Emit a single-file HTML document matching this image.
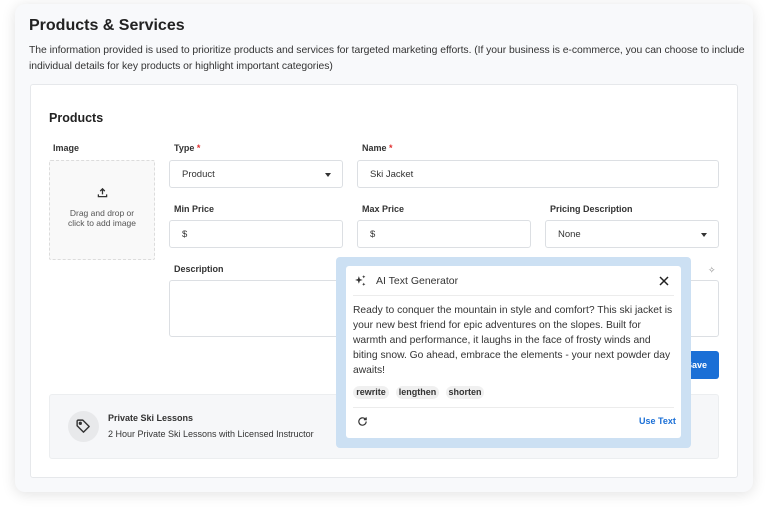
<!DOCTYPE html>
<html><head><meta charset="utf-8"><style>
*{box-sizing:border-box;margin:0;padding:0}
body{width:768px;height:518px;background:#fff;font-family:"Liberation Sans",sans-serif;color:#222;position:relative;overflow:hidden}
.a{position:absolute}
.outer{left:15px;top:4px;width:738px;height:488px;background:#f8f9fb;border-radius:10px;box-shadow:0 2px 14px rgba(0,0,0,.12)}
.inner{left:30px;top:84px;width:708px;height:394px;background:#fff;border:1px solid #e6e8eb;border-radius:3px}
.lbl{font-size:9px;font-weight:bold;color:#333}
.in{background:#fff;border:1px solid #dcdfe3;border-radius:3px;font-size:9.5px;color:#333;padding-left:12px;display:flex;align-items:center}
.caret{position:absolute;right:11px;top:12px;width:0;height:0;border-left:3.5px solid transparent;border-right:3.5px solid transparent;border-top:4px solid #333}
.star{color:#e03030}
.chip{top:386px;height:13px;background:#f0f0f0;border-radius:7px;font-size:9px;font-weight:bold;color:#333;line-height:13px;text-align:center}
</style></head><body>
<div class="a outer"></div>
<div class="a" style="left:29px;top:17px;font-size:16px;font-weight:bold;color:#222">Products &amp; Services</div>
<div class="a" style="left:29px;top:43px;width:725px;font-size:10.4px;line-height:16px;color:#333;letter-spacing:-0.05px">The information provided is used to prioritize products and services for targeted marketing efforts. (If your business is e-commerce, you can choose to include individual details for key products or highlight important categories)</div>
<div class="a inner"></div>
<div class="a" style="left:49px;top:111px;font-size:12.5px;font-weight:bold">Products</div>
<div class="a lbl" style="left:53px;top:143px">Image</div>
<div class="a lbl" style="left:174px;top:143px">Type <span class="star">*</span></div>
<div class="a lbl" style="left:362px;top:143px">Name <span class="star">*</span></div>
<div class="a" style="left:49px;top:160px;width:106px;height:100px;border:1px dashed #dcdcdc;background:#f9f9f9;border-radius:2px;text-align:center;font-size:8.5px;color:#555;line-height:10px">
<svg style="position:absolute;left:47px;top:26px" width="11" height="11" viewBox="0 0 12 12" fill="none" stroke="#333" stroke-width="1.4"><path d="M6 8V2M3.5 4.5L6 2l2.5 2.5M1.5 8v2.5h9V8"/></svg>
<div style="position:absolute;top:47px;width:100%">Drag and drop or<br>click to add image</div></div>
<div class="a in" style="left:169px;top:160px;width:174px;height:28px">Product<div class="caret"></div></div>
<div class="a in" style="left:357px;top:160px;width:362px;height:28px">Ski Jacket</div>
<div class="a lbl" style="left:174px;top:204px">Min Price</div>
<div class="a lbl" style="left:362px;top:204px">Max Price</div>
<div class="a lbl" style="left:550px;top:204px">Pricing Description</div>
<div class="a in" style="left:169px;top:220px;width:174px;height:28px">$</div>
<div class="a in" style="left:357px;top:220px;width:174px;height:28px">$</div>
<div class="a in" style="left:545px;top:220px;width:174px;height:28px">None<div class="caret"></div></div>
<div class="a lbl" style="left:174px;top:264px">Description</div>
<div class="a in" style="left:169px;top:280px;width:550px;height:57px"></div>
<div class="a" style="left:708px;top:265px;font-size:9px;color:#888">✧</div>
<div class="a" style="left:640px;top:351px;width:79px;height:28px;background:#1a6fd6;border-radius:3px;color:#fff;font-size:9px;font-weight:bold;line-height:28px;padding-left:46px">Save</div>
<div class="a" style="left:49px;top:394px;width:670px;height:65px;background:#f6f7f9;border:1px solid #eceef0;border-radius:3px"></div>
<div class="a" style="left:68px;top:411px;width:31px;height:31px;border-radius:50%;background:#e8e9eb"></div>
<svg class="a" style="left:75px;top:418px" width="17" height="17" viewBox="0 0 24 24" fill="none" stroke="#333" stroke-width="2" stroke-linejoin="round"><path d="M3 4v7l9 9 8-8-9-9H4z"/><circle cx="7.5" cy="7.5" r="1.3" fill="#333"/></svg>
<div class="a" style="left:108px;top:413px;font-size:9px;font-weight:bold;color:#333">Private Ski Lessons</div>
<div class="a" style="left:108px;top:429px;font-size:9px;color:#333">2 Hour Private Ski Lessons with Licensed Instructor</div>
<div class="a" style="left:687px;top:418px;font-size:10px;color:#888;line-height:4px">·<br>·<br>·</div>
<div class="a" style="left:336px;top:257px;width:355px;height:191px;background:#cce0f3;border-radius:4px"></div>
<div class="a" style="left:346px;top:266px;width:335px;height:172px;background:#fff;border-radius:3px"></div>
<svg class="a" style="left:354px;top:274px" width="13" height="13" viewBox="0 0 24 24" fill="#333"><path d="M9 4l1.8 5.2L16 11l-5.2 1.8L9 18l-1.8-5.2L2 11l5.2-1.8z"/><path d="M18 2l.9 2.1L21 5l-2.1.9L18 8l-.9-2.1L15 5l2.1-.9z"/><path d="M18 16l.9 2.1L21 19l-2.1.9L18 22l-.9-2.1L15 19l2.1-.9z"/></svg>
<div class="a" style="left:376px;top:275px;font-size:10.5px;color:#333">AI Text Generator</div>
<svg class="a" style="left:659px;top:276px" width="10" height="10" viewBox="0 0 10 10" stroke="#222" stroke-width="1.5"><path d="M1 1l8 8M9 1L1 9"/></svg>
<div class="a" style="left:353px;top:295px;width:321px;height:1px;background:#ececec"></div>
<div class="a" style="left:353px;top:303px;width:322px;font-size:10.3px;line-height:15px;color:#333">Ready to conquer the mountain in style and comfort? This ski jacket is your new best friend for epic adventures on the slopes. Built for warmth and performance, it laughs in the face of frosty winds and biting snow. Go ahead, embrace the elements - your next powder day awaits!</div>
<div class="a chip" style="left:353px;width:36px">rewrite</div>
<div class="a chip" style="left:396px;width:43px">lengthen</div>
<div class="a chip" style="left:446px;width:38px">shorten</div>
<div class="a" style="left:353px;top:407px;width:321px;height:1px;background:#ececec"></div>
<svg class="a" style="left:357px;top:416px" width="11" height="11" viewBox="0 0 24 24" fill="none" stroke="#333" stroke-width="2.6"><path d="M20 12a8 8 0 1 1-2.5-5.8"/><path d="M20 3v5h-5" fill="#333"/></svg>
<div class="a" style="left:639px;top:416px;font-size:9px;font-weight:bold;color:#1a6fd6">Use Text</div>
</body></html>
